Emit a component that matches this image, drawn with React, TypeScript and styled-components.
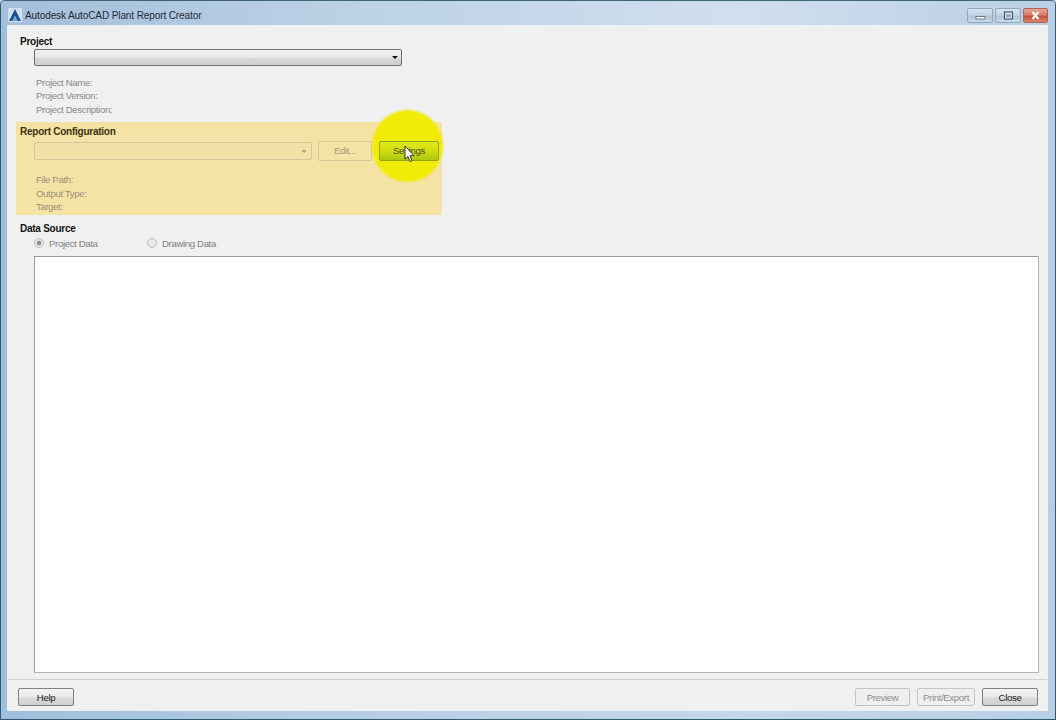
import React from "react";
import styled, { createGlobalStyle } from "styled-components";

const GlobalStyle = createGlobalStyle`
  html, body {
    margin: 0;
    padding: 0;
    background: #b9d2e8;
  }
  body {
    font-family: "Liberation Sans", Arial, sans-serif;
    font-size: 9.6px;
    letter-spacing: -0.35px;
  }
`;

const Frame = styled.div`
  width: 1056px;
  height: 720px;
  box-sizing: border-box;
  display: flex;
  flex-direction: column;
  overflow: hidden;
  border: 1px solid #2f5a70;
  border-top-color: #3f6478;
  border-radius: 5px 5px 0 0;
  background: linear-gradient(90deg, #9fbedb 0%, #b5cde4 30%, #c5d8ea 70%, #b7cfe5 100%);
`;

const TitleBar = styled.div`
  height: 24px;
  flex: none;
  display: flex;
  align-items: center;
  padding: 3px 7px 0 7px;
  box-sizing: border-box;
  background: linear-gradient(90deg, #a3bfdb 0%, #bdd2e6 35%, #d0dfee 70%, #b9cfe4 100%);
`;

const AppLogo = styled.svg`
  width: 14px;
  height: 14px;
  flex: none;
  margin-right: 3px;
`;

const TitleText = styled.div`
  font-size: 10px;
  letter-spacing: -0.1px;
  color: #1d2a36;
  flex: 1;
  margin-top: 2px;
`;

const WinButtons = styled.div`
  display: flex;
  gap: 2px;
  margin-top: 1px;
`;

const WinButton = styled.div<{ $close?: boolean }>`
  width: ${(p) => (p.$close ? "25px" : "26px")};
  height: 15px;
  box-sizing: border-box;
  display: flex;
  align-items: center;
  justify-content: center;
  border: 1px solid ${(p) => (p.$close ? "#a8695c" : "#8ea8c0")};
  border-radius: 2px;
  background: ${(p) =>
    p.$close
      ? "linear-gradient(180deg, #e3a89a 0%, #d67864 48%, #c64c38 54%, #d8826c 100%)"
      : "linear-gradient(180deg, #d8e4ef 0%, #c2d3e3 48%, #aec4d9 54%, #c9d9e8 100%)"};
  & > svg {
    width: 11px;
    height: 9px;
  }
`;

const Body = styled.div`
  flex: 1;
  margin: 0 7px 8px 6px;
  background: #f0f0f0;
  display: flex;
  flex-direction: column;
  min-height: 0;
  position: relative;
`;

const Main = styled.div`
  flex: 1;
  display: flex;
  flex-direction: column;
  min-height: 0;
  padding: 10px 9px 6px 9px;
`;

const GroupTitle = styled.div<{ $onHighlight?: boolean }>`
  font-size: 10px;
  font-weight: bold;
  letter-spacing: -0.25px;
  color: ${(p) => (p.$onHighlight ? "#3a3210" : "#111")};
  line-height: 13px;
  margin-left: 4px;
`;

const Indented = styled.div`
  margin-left: 18px;
`;

const ProjectCombo = styled.div`
  width: 368px;
  height: 17px;
  box-sizing: border-box;
  margin-top: 1px;
  border: 1px solid #6e6e6e;
  border-radius: 2px;
  background: linear-gradient(180deg, #f2f2f2 0%, #ebebeb 45%, #d8d8d8 55%, #cfcfcf 100%);
  display: flex;
  align-items: center;
  justify-content: flex-end;
  padding-right: 3px;
`;

const Arrow = styled.div<{ $muted?: boolean }>`
  width: 0;
  height: 0;
  border-left: 3px solid transparent;
  border-right: 3px solid transparent;
  border-top: 3px solid ${(p) => (p.$muted ? "#b8a67a" : "#111")};
`;

const InfoList = styled.div<{ $top: number }>`
  margin-top: ${(p) => p.$top}px;
  margin-left: 20px;
`;

const InfoLine = styled.div<{ $warm?: boolean }>`
  line-height: 13.4px;
  color: ${(p) => (p.$warm ? "#9b9078" : "#8b8b8b")};
`;

const Highlight = styled.div`
  width: 426px;
  height: 93px;
  margin-top: 6px;
  box-sizing: border-box;
  padding-top: 3px;
  background: #f5e3a6;
`;

const ConfigRow = styled.div`
  display: flex;
  align-items: center;
  margin: 3px 0 0 18px;
`;

const ConfigCombo = styled.div`
  width: 278px;
  height: 18px;
  box-sizing: border-box;
  border: 1px solid #d2c69a;
  border-radius: 2px;
  background: #f3e2a8;
  display: flex;
  align-items: center;
  justify-content: flex-end;
  padding-right: 4px;
`;

const FlatButton = styled.div`
  height: 20px;
  box-sizing: border-box;
  padding-bottom: 1px;
  display: flex;
  align-items: center;
  justify-content: center;
  border-radius: 2px;
`;

const EditButton = styled(FlatButton)`
  width: 54px;
  margin-left: 6px;
  border: 1px solid #d4c89c;
  color: #a59a80;
`;

const SettingsButton = styled(FlatButton)`
  width: 60px;
  margin-left: 7px;
  border: 1px solid #96a31c;
  background: linear-gradient(180deg, #e0ea14 0%, #d0dc10 50%, #aec610 100%);
  color: #4b5216;
  position: relative;
  z-index: 2;
`;

const Spotlight = styled.div`
  position: absolute;
  left: 365px;
  top: 85px;
  width: 71px;
  height: 72px;
  border-radius: 50%;
  background: #f0ec06;
  filter: blur(1px);
  z-index: 1;
`;

const Pointer = styled.svg`
  position: absolute;
  left: 397px;
  top: 120px;
  width: 12px;
  height: 18px;
  z-index: 3;
`;

const SourceHeading = styled(GroupTitle)`
  margin-top: 7px;
`;

const RadioRow = styled.div`
  display: flex;
  align-items: center;
  height: 14px;
  margin: 1px 0 0 18px;
`;

const RadioItem = styled.div<{ $width: number }>`
  width: ${(p) => p.$width}px;
  display: flex;
  align-items: center;
  gap: 5px;
  color: #808080;
`;

const RadioDot = styled.div<{ $checked?: boolean }>`
  width: 10px;
  height: 10px;
  box-sizing: border-box;
  border-radius: 50%;
  border: 1px solid #bdbdbd;
  background: ${(p) =>
    p.$checked
      ? "radial-gradient(circle, #8f8f8f 0 2px, #e6e6e6 2.6px)"
      : "#e9e9e9"};
`;

const DataPanel = styled.div`
  flex: 1;
  margin: 6px 0 0 18px;
  width: 1005px;
  box-sizing: border-box;
  background: #fff;
  border: 1px solid #9a9a9a;
  border-right-color: #b5b5b5;
  border-bottom-color: #b5b5b5;
`;

const Footer = styled.div`
  flex: none;
  height: 32px;
  box-sizing: border-box;
  margin: 0 1px;
  border-top: 1px solid #d0d0d0;
  display: flex;
  align-items: center;
  gap: 7px;
  padding: 3px 9px 0 10px;
`;

const FootButton = styled.div<{ $enabled?: boolean; $width: number }>`
  width: ${(p) => p.$width}px;
  height: 18px;
  box-sizing: border-box;
  display: flex;
  align-items: center;
  justify-content: center;
  border-radius: 2px;
  border: 1px solid ${(p) => (p.$enabled ? "#7f7f7f" : "#c4c4c4")};
  color: ${(p) => (p.$enabled ? "#1a1a1a" : "#8c8c8c")};
  background: ${(p) =>
    p.$enabled
      ? "linear-gradient(180deg, #f3f3f3 0%, #ebebeb 45%, #dcdcdc 55%, #cfcfcf 100%)"
      : "#efefef"};
`;

const Spacer = styled.div`
  flex: 1;
`;

export default function App() {
  return (
    <>
      <GlobalStyle />
      <Frame>
        <TitleBar>
          <AppLogo viewBox="0 0 14 14">
            <rect width="14" height="14" fill="#cfe0f0" />
            <path d="M1 13 L7 1 L13 13 L9.5 13 L7 8 L4.5 13 Z" fill="#1c4f96" />
            <path d="M4.5 13 L7 8 L9.5 13 Z" fill="#6fa3d8" />
          </AppLogo>
          <TitleText>Autodesk AutoCAD Plant Report Creator</TitleText>
          <WinButtons>
            <WinButton>
              <svg viewBox="0 0 11 9">
                <rect x="1" y="5.5" width="9" height="2.5" fill="#fff" stroke="#44566a" strokeWidth="0.7" />
              </svg>
            </WinButton>
            <WinButton>
              <svg viewBox="0 0 11 9">
                <rect x="1.5" y="1" width="8" height="7" fill="#dfe9f2" stroke="#33465a" strokeWidth="1" />
                <rect x="3" y="3.2" width="5" height="3" fill="#8ea8c0" />
              </svg>
            </WinButton>
            <WinButton $close>
              <svg viewBox="0 0 11 9">
                <path d="M2.5 1 L8.5 8 M8.5 1 L2.5 8" stroke="#fff" strokeWidth="2.2" />
              </svg>
            </WinButton>
          </WinButtons>
        </TitleBar>
        <Body>
          <Main>
            <GroupTitle>Project</GroupTitle>
            <Indented>
              <ProjectCombo>
                <Arrow />
              </ProjectCombo>
            </Indented>
            <InfoList $top={10}>
              <InfoLine>Project Name:</InfoLine>
              <InfoLine>Project Version:</InfoLine>
              <InfoLine>Project Description:</InfoLine>
            </InfoList>
            <Highlight>
              <GroupTitle $onHighlight>Report Configuration</GroupTitle>
              <ConfigRow>
                <ConfigCombo>
                  <Arrow $muted />
                </ConfigCombo>
                <EditButton>Edit...</EditButton>
                <SettingsButton>Settings</SettingsButton>
              </ConfigRow>
              <InfoList $top={12}>
                <InfoLine $warm>File Path:</InfoLine>
                <InfoLine $warm>Output Type:</InfoLine>
                <InfoLine $warm>Target:</InfoLine>
              </InfoList>
            </Highlight>
            <SourceHeading>Data Source</SourceHeading>
            <RadioRow>
              <RadioItem $width={113}>
                <RadioDot $checked />
                Project Data
              </RadioItem>
              <RadioItem $width={100}>
                <RadioDot />
                Drawing Data
              </RadioItem>
            </RadioRow>
            <DataPanel />
          </Main>
          <Footer>
            <FootButton $enabled $width={56}>Help</FootButton>
            <Spacer />
            <FootButton $width={55}>Preview</FootButton>
            <FootButton $width={58}>Print/Export</FootButton>
            <FootButton $enabled $width={56}>Close</FootButton>
          </Footer>
          <Spotlight />
          <Pointer viewBox="0 0 12 18">
            <path
              d="M1 1 L1 14 L4 11.5 L6 16.5 L8 15.6 L6 10.8 L10 10.6 Z"
              fill="#fff"
              stroke="#222"
              strokeWidth="0.9"
            />
          </Pointer>
        </Body>
      </Frame>
    </>
  );
}
